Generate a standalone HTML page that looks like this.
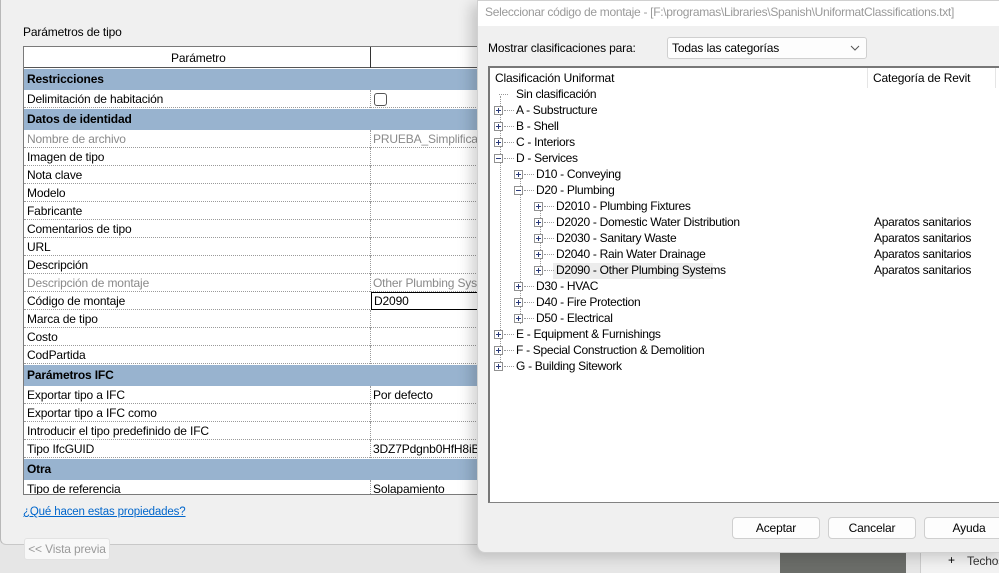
<!DOCTYPE html>
<html><head><meta charset="utf-8"><style>
*{box-sizing:border-box;margin:0;padding:0}
body{width:999px;height:573px;overflow:hidden;background:#e6e6e6;font-family:"Liberation Sans",sans-serif;font-size:12px;color:#000;position:relative;letter-spacing:-0.15px}
.abs{position:absolute}
#left{left:0;top:0;width:490px;height:545px;background:#f0f0f0;border-left:1px solid #b8b8b8;border-bottom:1px solid #c8c8c8;border-bottom-left-radius:6px}
#tbl{left:23px;top:46px;width:470px;height:449px;border:1px solid #7a7a7a;border-right:none;background:#fff;overflow:hidden}
.row{position:absolute;left:0;width:470px;height:18px;border-bottom:1px dotted #9a9a9a;white-space:nowrap}
.row .a{position:absolute;left:3px;top:2px}
.row .b{position:absolute;left:349px;top:2px}
.row .d{position:absolute;left:346px;top:0;height:18px;border-left:1px dotted #9a9a9a}
.grp{position:absolute;left:0;width:470px;background:#98b3cf;font-weight:bold;padding-left:3px;height:21px;line-height:21px}
.gray{color:#8a8a8a}
#dlg{left:477px;top:0;width:530px;height:553px;background:#f0f0f0;border-bottom-left-radius:8px;box-shadow:-6px 4px 14px rgba(0,0,0,.18);border:1px solid #d0d0d0}
#title{position:absolute;left:0;top:0;width:100%;height:25px;background:#fff;color:#9a9a9a;font-size:12px;letter-spacing:-0.3px;padding:4px 0 0 7px;white-space:nowrap}
#tree{left:10px;top:65px;width:520px;height:437px;background:#fff;border:1px solid #828282;border-top:2px solid #777;border-left:2px solid #777}
.ti{position:absolute;white-space:nowrap;height:16px;line-height:16px;letter-spacing:-0.3px}
.ex{position:absolute;width:9px;height:9px;border:1px solid #919191;background:#fff}
.ex:before{content:"";position:absolute;left:1px;top:3px;width:5px;height:1px;background:#2a3a7a}
.ex.p:after{content:"";position:absolute;left:3px;top:1px;width:1px;height:5px;background:#2a3a7a}
.dh{position:absolute;border-top:1px dotted #999;width:9px}
.dv{position:absolute;border-left:1px dotted #999}
.btn{position:absolute;top:517px;width:88px;height:22px;background:#fdfdfd;border:1px solid #cfcfcf;border-radius:4px;text-align:center;line-height:20px}
</style></head><body>
<div class="abs" style="left:780px;top:553px;width:126px;height:20px;background:#6b6d69"></div>
<div class="abs" style="left:920px;top:553px;width:79px;height:20px;background:#f2f2f2;border-left:1px solid #ccc"></div>
<div class="abs" style="left:948px;top:553px;font-size:12px">+</div>
<div class="abs" style="left:967px;top:554px;color:#333">Techos</div>
<div class="abs" id="left">
 <div class="abs" style="left:22px;top:25px">Parámetros de tipo</div>
</div>
<div class="abs" id="tbl">
 <div class="abs" style="left:0;top:0;width:470px;height:21px;border-bottom:1px solid #555;background:#fff"></div>
 <div class="abs" style="left:147px;top:4px">Parámetro</div>
 <div class="abs" style="left:346px;top:0;height:21px;border-left:1px solid #333"></div>
 <div class="grp" style="top:22px">Restricciones</div>
 <div class="row" style="top:43px"><span class="a">Delimitación de habitación</span><span class="d"></span><span class="abs" style="left:350px;top:3px;width:13px;height:13px;border:1px solid #555;border-radius:3px"></span></div>
 <div class="grp" style="top:62px">Datos de identidad</div>
 <div class="row" style="top:83px"><span class="a gray">Nombre de archivo</span><span class="d"></span><span class="b gray">PRUEBA_Simplificar</span></div>
 <div class="row" style="top:101px"><span class="a">Imagen de tipo</span><span class="d"></span></div>
 <div class="row" style="top:119px"><span class="a">Nota clave</span><span class="d"></span></div>
 <div class="row" style="top:137px"><span class="a">Modelo</span><span class="d"></span></div>
 <div class="row" style="top:155px"><span class="a">Fabricante</span><span class="d"></span></div>
 <div class="row" style="top:173px"><span class="a">Comentarios de tipo</span><span class="d"></span></div>
 <div class="row" style="top:191px"><span class="a">URL</span><span class="d"></span></div>
 <div class="row" style="top:209px"><span class="a">Descripción</span><span class="d"></span></div>
 <div class="row" style="top:227px"><span class="a gray">Descripción de montaje</span><span class="d"></span><span class="b gray">Other Plumbing Sys</span></div>
 <div class="row" style="top:245px"><span class="a">Código de montaje</span><span class="abs" style="left:347px;top:0;width:130px;height:18px;border:1px solid #000;padding:1px 2px">D2090</span></div>
 <div class="row" style="top:263px"><span class="a">Marca de tipo</span><span class="d"></span></div>
 <div class="row" style="top:281px"><span class="a">Costo</span><span class="d"></span></div>
 <div class="row" style="top:299px"><span class="a">CodPartida</span><span class="d"></span></div>
 <div class="grp" style="top:318px">Parámetros IFC</div>
 <div class="row" style="top:339px"><span class="a">Exportar tipo a IFC</span><span class="d"></span><span class="b">Por defecto</span></div>
 <div class="row" style="top:357px"><span class="a">Exportar tipo a IFC como</span><span class="d"></span></div>
 <div class="row" style="top:375px"><span class="a">Introducir el tipo predefinido de IFC</span><span class="d"></span></div>
 <div class="row" style="top:393px"><span class="a">Tipo IfcGUID</span><span class="d"></span><span class="b">3DZ7Pdgnb0HfH8iB</span></div>
 <div class="grp" style="top:412px">Otra</div>
 <div class="row" style="top:433px"><span class="a">Tipo de referencia</span><span class="d"></span><span class="b">Solapamiento</span></div>
</div>
<div class="abs" style="left:23px;top:506px;color:#0066cc;text-decoration:underline;font-size:11.5px">¿Qué hacen estas propiedades?</div>
<div class="abs" style="left:24px;top:538px;width:86px;height:22px;background:#f8f8f8;border:1px solid #e2e2e2;border-radius:3px;color:#9a9a9a;text-align:center;line-height:20px">&lt;&lt; Vista previa</div>

<div class="abs" id="dlg">
 <div id="title">Seleccionar código de montaje - [F:\programas\Libraries\Spanish\UniformatClassifications.txt]</div>
 <div class="abs" style="left:10px;top:40px">Mostrar clasificaciones para:</div>
 <div class="abs" style="left:189px;top:36px;width:200px;height:22px;background:#fdfdfd;border:1px solid #cfcfcf;border-radius:3px;padding:3px 0 0 4px">Todas las categorías<svg class="abs" style="right:6px;top:7px" width="10" height="6"><path d="M1 1 L5 5 L9 1" fill="none" stroke="#555" stroke-width="1"/></svg></div>
 <div class="abs" id="tree">
  <div class="abs" style="left:0;top:0;width:518px;height:20px;background:#fff"></div>
  <div class="abs" style="left:5px;top:3px">Clasificación Uniformat</div>
  <div class="abs" style="left:377px;top:0;height:20px;border-left:1px solid #e5e5e5"></div>
  <div class="abs" style="left:383px;top:3px">Categoría de Revit</div>
  <div class="abs" style="left:505px;top:0;height:20px;border-left:1px solid #e5e5e5"></div>
  <div class="dv" style="left:10px;top:28px;height:272px"></div>
  <div class="dv" style="left:30px;top:108px;height:148px"></div>
  <div class="dv" style="left:50px;top:140px;height:68px"></div>
  <div class="abs" style="left:63px;top:195px;width:160px;height:16px;background:#ececec"></div>
 </div>
</div>
<div class="abs" style="left:0;top:0">
 <div class="dh" style="left:499px;top:94px"></div><div class="ti" style="left:516px;top:86px">Sin clasificación</div>
 <div class="ex p" style="left:494px;top:106px"></div><div class="dh" style="left:504px;top:110px;width:10px"></div><div class="ti" style="left:516px;top:102px">A - Substructure</div>
 <div class="ex p" style="left:494px;top:122px"></div><div class="dh" style="left:504px;top:126px;width:10px"></div><div class="ti" style="left:516px;top:118px">B - Shell</div>
 <div class="ex p" style="left:494px;top:138px"></div><div class="dh" style="left:504px;top:142px;width:10px"></div><div class="ti" style="left:516px;top:134px">C - Interiors</div>
 <div class="ex" style="left:494px;top:154px"></div><div class="dh" style="left:504px;top:158px;width:10px"></div><div class="ti" style="left:516px;top:150px">D - Services</div>
 <div class="ex p" style="left:514px;top:170px"></div><div class="dh" style="left:524px;top:174px;width:10px"></div><div class="ti" style="left:536px;top:166px">D10 - Conveying</div>
 <div class="ex" style="left:514px;top:186px"></div><div class="dh" style="left:524px;top:190px;width:10px"></div><div class="ti" style="left:536px;top:182px">D20 - Plumbing</div>
 <div class="ex p" style="left:534px;top:202px"></div><div class="dh" style="left:544px;top:206px;width:10px"></div><div class="ti" style="left:556px;top:198px">D2010 - Plumbing Fixtures</div>
 <div class="ex p" style="left:534px;top:218px"></div><div class="dh" style="left:544px;top:222px;width:10px"></div><div class="ti" style="left:556px;top:214px">D2020 - Domestic Water Distribution</div><div class="ti" style="left:874px;top:214px">Aparatos sanitarios</div>
 <div class="ex p" style="left:534px;top:234px"></div><div class="dh" style="left:544px;top:238px;width:10px"></div><div class="ti" style="left:556px;top:230px">D2030 - Sanitary Waste</div><div class="ti" style="left:874px;top:230px">Aparatos sanitarios</div>
 <div class="ex p" style="left:534px;top:250px"></div><div class="dh" style="left:544px;top:254px;width:10px"></div><div class="ti" style="left:556px;top:246px">D2040 - Rain Water Drainage</div><div class="ti" style="left:874px;top:246px">Aparatos sanitarios</div>
 <div class="ex p" style="left:534px;top:266px"></div><div class="dh" style="left:544px;top:270px;width:10px"></div><div class="ti" style="left:556px;top:262px">D2090 - Other Plumbing Systems</div><div class="ti" style="left:874px;top:262px">Aparatos sanitarios</div>
 <div class="ex p" style="left:514px;top:282px"></div><div class="dh" style="left:524px;top:286px;width:10px"></div><div class="ti" style="left:536px;top:278px">D30 - HVAC</div>
 <div class="ex p" style="left:514px;top:298px"></div><div class="dh" style="left:524px;top:302px;width:10px"></div><div class="ti" style="left:536px;top:294px">D40 - Fire Protection</div>
 <div class="ex p" style="left:514px;top:314px"></div><div class="dh" style="left:524px;top:318px;width:10px"></div><div class="ti" style="left:536px;top:310px">D50 - Electrical</div>
 <div class="ex p" style="left:494px;top:330px"></div><div class="dh" style="left:504px;top:334px;width:10px"></div><div class="ti" style="left:516px;top:326px">E - Equipment &amp; Furnishings</div>
 <div class="ex p" style="left:494px;top:346px"></div><div class="dh" style="left:504px;top:350px;width:10px"></div><div class="ti" style="left:516px;top:342px">F - Special Construction &amp; Demolition</div>
 <div class="ex p" style="left:494px;top:362px"></div><div class="dh" style="left:504px;top:366px;width:10px"></div><div class="ti" style="left:516px;top:358px">G - Building Sitework</div>
</div>
<div class="btn" style="left:732px">Aceptar</div>
<div class="btn" style="left:828px">Cancelar</div>
<div class="btn" style="left:924px;width:90px">Ayuda</div>
</body></html>
